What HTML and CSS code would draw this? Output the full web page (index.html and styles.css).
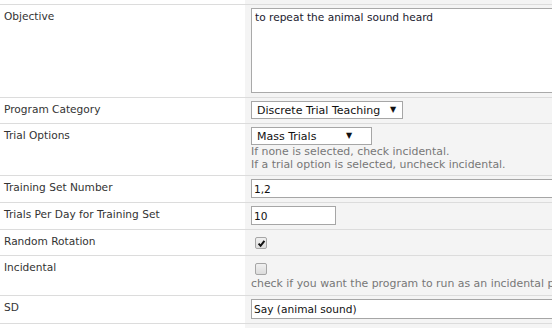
FILE: index.html
```html
<!DOCTYPE HTML>
<html lang=en>
  <head>
    <title>Program Details</title>
    <meta name=viewport content=width=device-width,initial-scale=1>
    <link rel="stylesheet" href="styles.css">
  </head>
  <body>
    <table class=program-form>
      <colgroup>
        <col class=label-col>
        <col>
      </colgroup>
      <tr class=clipped>
        <td class=label></td>
        <td class=field></td>
      </tr>
      <tr>
        <td class=label>Objective</td>
        <td class=field>
          <textarea class=objective>to repeat the animal sound heard</textarea>
        </td>
      </tr>
      <tr>
        <td class=label>Program Category</td>
        <td class=field>
          <span class="select category">
            <select><option>Discrete Trial Teaching</option></select>
          </span>
        </td>
      </tr>
      <tr>
        <td class=label>Trial Options</td>
        <td class=field>
          <span class="select trials">
            <select><option>Mass Trials</option></select>
          </span>
          <p class=hint>If none is selected, check incidental.<br>If a trial option is selected, uncheck incidental.</p>
        </td>
      </tr>
      <tr>
        <td class=label>Training Set Number</td>
        <td class=field><input type=text class=wide value="1,2"></td>
      </tr>
      <tr>
        <td class=label>Trials Per Day for Training Set</td>
        <td class=field><input type=text class=short value="10"></td>
      </tr>
      <tr>
        <td class=label>Random Rotation</td>
        <td class=field>
          <div class=check-line>
            <span class="checkbox checked">
              <svg viewBox="0 0 11 11" width=11 height=11><path d="M2.6 5.6 L4.6 7.8 L8.4 2.8" /></svg>
            </span>
          </div>
        </td>
      </tr>
      <tr>
        <td class=label>Incidental</td>
        <td class=field>
          <div class=check-line><span class=checkbox></span></div>
          <p class="hint single">check if you want the program to run as an incidental program</p>
        </td>
      </tr>
      <tr>
        <td class=label>SD</td>
        <td class=field><input type=text class="wide tall" value="Say (animal sound)"></td>
      </tr>
      <tr class=clipped>
        <td class=label></td>
        <td class=field></td>
      </tr>
    </table>
  </body>
</html>
```

FILE: styles.css
```css
html, body {
  margin: 0;
  overflow: hidden;
  background: #fff;
}
.program-form {
  font-family: "DejaVu Sans", Verdana, sans-serif;
  font-size: 10.6px;
  color: #333;
  border-collapse: collapse;
  width: 720px;
  table-layout: fixed;
}
.label-col {
  width: 245px;
}
.program-form tr {
  border-top: 1px solid #dcdcdc;
}
.program-form tr:first-child {
  border-top: none;
}
.program-form tr.clipped td {
  height: 4px;
  padding: 0;
}
.label {
  padding: 5px 0 0 4px;
  line-height: 13px;
  vertical-align: top;
  white-space: nowrap;
}
.field {
  background: #f4f4f4;
  padding: 3px 5px 4px 6px;
  vertical-align: top;
}
.objective {
  display: block;
  box-sizing: border-box;
  width: 440px;
  height: 85px;
  margin: 0;
  padding: 2px 3px;
  border: 1px solid #a9a9a9;
  font: inherit;
  color: #1a1a2e;
  resize: none;
}
.select {
  position: relative;
  display: block;
}
.select select {
  appearance: none;
  -webkit-appearance: none;
  box-sizing: border-box;
  height: 18px;
  margin: 0;
  padding: 0 0 0 5px;
  border: 1px solid #a6a6a6;
  border-radius: 0;
  background: #fff;
  font-family: inherit;
  font-size: 11px;
  color: #111;
}
.select::after {
  content: "\25BC";
  position: absolute;
  top: 4px;
  font-size: 8px;
  color: #111;
}
.category select { width: 152px; }
.category::after { left: 139px; }
.trials select { width: 121px; }
.trials::after { left: 95px; }
.hint {
  margin: 0;
  line-height: 13px;
  font-size: 10.9px;
  color: #777;
  white-space: nowrap;
}
.hint.single {
  line-height: 14px;
}
input[type=text] {
  display: block;
  box-sizing: border-box;
  height: 19px;
  margin: 0;
  padding: 0 2px;
  border: 1px solid #a6a6a6;
  font: inherit;
  color: #111;
}
input.wide { width: 440px; }
input.tall { height: 20px; }
input.short { width: 85px; }
.check-line {
  height: 18px;
  padding-left: 4px;
  padding-top: 4px;
  box-sizing: border-box;
}
.checkbox {
  display: block;
  box-sizing: border-box;
  width: 12px;
  height: 12px;
  border: 1px solid #a6a6a6;
  border-radius: 2px;
  background: linear-gradient(#f0f0f0, #dcdcdc);
}
.checkbox svg {
  display: block;
  margin: -0.5px;
}
.checkbox path {
  fill: none;
  stroke: #111;
  stroke-width: 2;
}
```
